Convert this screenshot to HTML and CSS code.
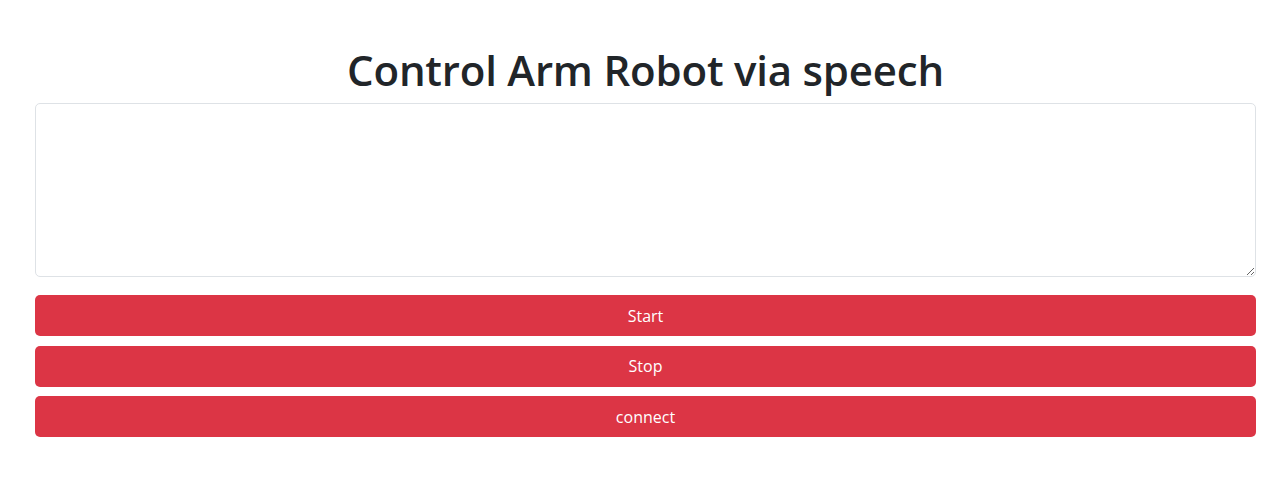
FILE: index.html
```html
<!DOCTYPE html>
<html lang="en">
<head>
<meta charset="utf-8">
<title>Control Arm Robot via speech</title>
<link rel="stylesheet" href="styles.css">
</head>
<body>
<main class="container">
  <h1 class="title">Control Arm Robot via speech</h1>
  <textarea class="speech-box"></textarea>
  <div class="actions">
    <button class="btn">Start</button>
    <button class="btn">Stop</button>
    <button class="btn">connect</button>
  </div>
</main>
</body>
</html>
```

FILE: styles.css
```css
* { box-sizing: border-box; }
html, body { margin: 0; padding: 0; background: #fff; }
body {
  font-family: "Open Sans", "Noto Sans", sans-serif;
  color: #212529;
}
.container {
  width: 1221px;
  margin: 0 0 0 35px;
  padding-top: 44px;
  display: flex;
  flex-direction: column;
}
.title {
  margin: 0 0 8px;
  text-align: center;
  font-size: 42px;
  font-weight: 600;
  line-height: 51px;
  letter-spacing: -0.2px;
}
.speech-box {
  display: block;
  width: 100%;
  height: 174px;
  border: 1px solid #dee2e6;
  border-radius: 5px;
  resize: vertical;
  margin: 0;
  font-family: inherit;
}
.actions {
  margin-top: 18px;
  display: flex;
  flex-direction: column;
  gap: 9.5px;
}
.btn {
  height: 41px;
  width: 100%;
  border: 0;
  border-radius: 5px;
  background: #dc3545;
  color: #fff;
  font-family: inherit;
  font-size: 16px;
  padding: 0;
}
```
